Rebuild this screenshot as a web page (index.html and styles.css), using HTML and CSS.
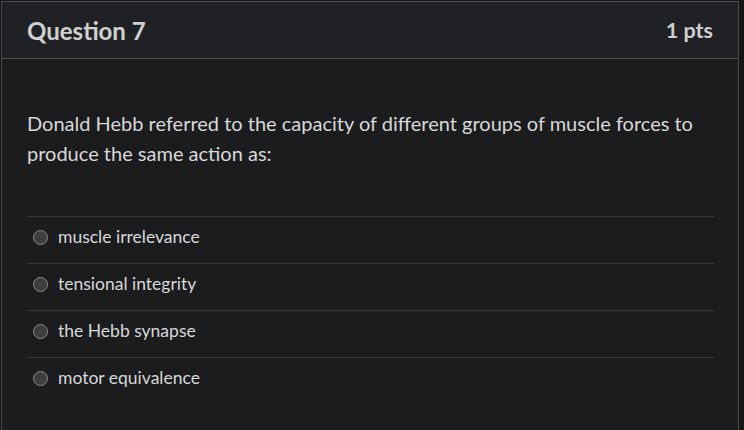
FILE: index.html
```html
<!DOCTYPE html>
<html>
<head>
<meta charset="utf-8">
<link rel="stylesheet" href="styles.css">
</head>
<body>
<div class="question">
  <div class="header">
    <span class="title">Question 7</span>
    <span class="pts">1 pts</span>
  </div>
  <div class="content">
    <p class="text">Donald Hebb referred to the capacity of different groups of muscle forces to produce the same action as:</p>
    <div class="answers">
      <label class="answer"><span class="radio"></span><span>muscle irrelevance</span></label>
      <label class="answer"><span class="radio"></span><span>tensional integrity</span></label>
      <label class="answer"><span class="radio"></span><span>the Hebb synapse</span></label>
      <label class="answer"><span class="radio"></span><span>motor equivalence</span></label>
    </div>
  </div>
</div>
</body>
</html>
```
FILE: styles.css
```css
html, body {
  margin: 0;
  padding: 0;
  background: #151516;
  font-family: Lato, "Noto Sans", sans-serif;
  color: #d8d8d8;
  height: 430px;
  overflow: hidden;
}
body {
  padding: 1px 5px 0 1px;
}
.question {
  border: 1px solid #4b4b4d;
  background: #1b1c1e;
  height: 600px;
}
.header {
  display: flex;
  justify-content: space-between;
  align-items: center;
  height: 56px;
  padding: 0 25px 0 25px;
  background: #202124;
  border-bottom: 1px solid #4b4b4d;
  font-weight: 700;
  color: #d0d0d0;
}
.title {
  font-size: 24px;
}
.pts {
  font-size: 21.5px;
}
.content {
  padding: 50px 24px 0 25px;
}
.text {
  margin: 0;
  font-size: 20px;
  line-height: 29.5px;
}
.answers {
  margin-top: 48px;
}
.answer {
  display: flex;
  align-items: center;
  height: 39px;
  padding-bottom: 7px;
  border-top: 1px solid #3a3a3c;
  font-size: 17.5px;
  padding-left: 6px;
}
.radio {
  width: 13px;
  height: 13px;
  border-radius: 50%;
  border: 1px solid #8a8a8a;
  background: #3e3e40;
  margin-right: 10px;
  margin-top: 2px;
}
```
